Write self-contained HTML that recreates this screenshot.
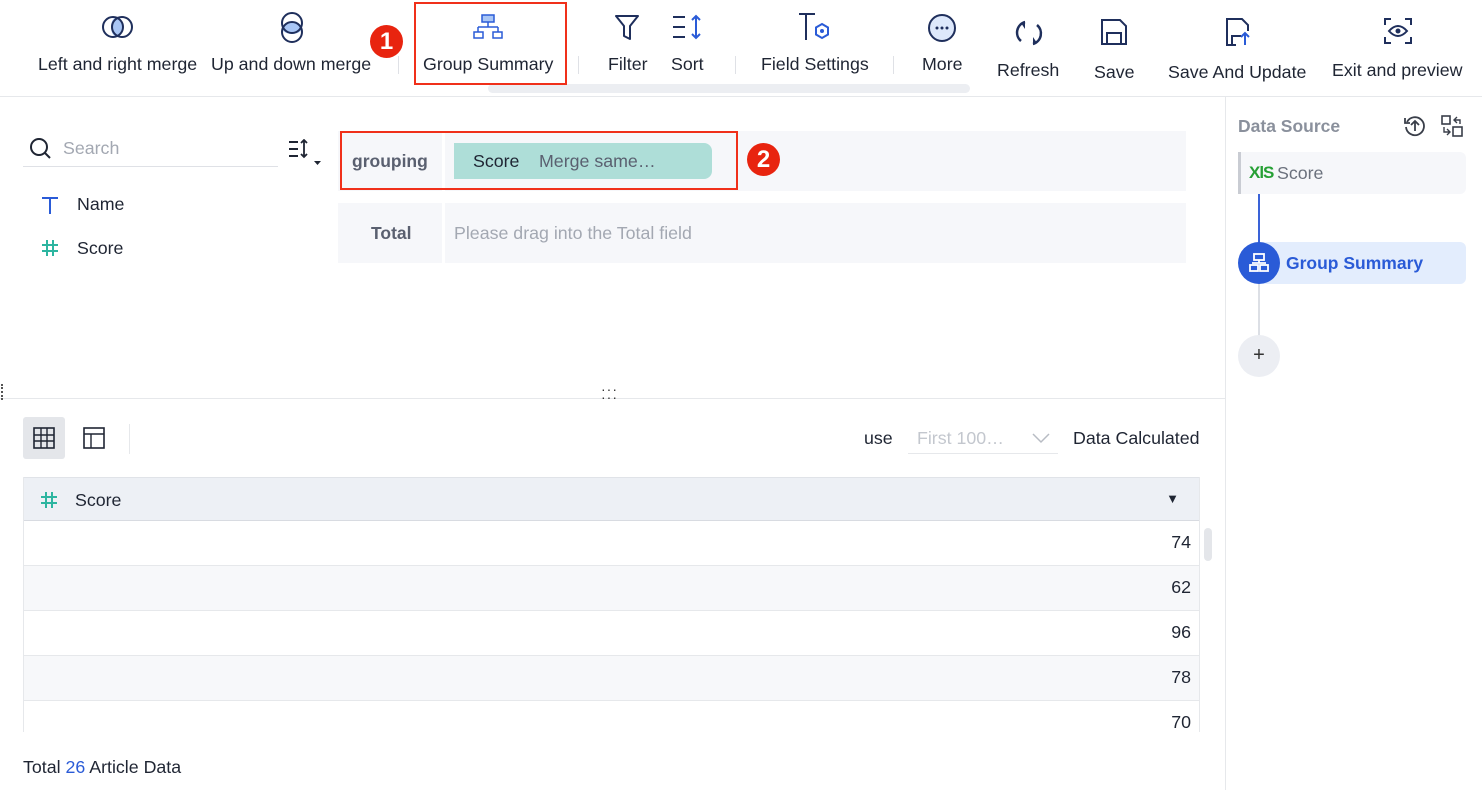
<!DOCTYPE html>
<html><head><meta charset="utf-8"><style>
*{box-sizing:border-box;margin:0;padding:0}
body{width:1482px;height:790px;overflow:hidden;background:#fff;font-family:"Liberation Sans",sans-serif;color:#1f2533;position:relative}
.a{position:absolute}
.lbl{font-size:17.8px;color:#1f2533;white-space:nowrap;position:absolute}
.sep{position:absolute;width:1px;height:18px;background:#dfe1e6;top:56px}
svg{position:absolute}
</style></head><body>
<!-- toolbar -->
<div class="a" style="left:0;top:96px;width:1482px;height:1px;background:#e6e8eb"></div>
<div class="a" style="left:488px;top:84px;width:482px;height:9px;border-radius:5px;background:#eceef2"></div>

<svg style="left:101px;top:13px" width="34" height="28" viewBox="0 0 34 28"><ellipse cx="16" cy="14" rx="6" ry="10" fill="#a9c6f5"/><circle cx="12" cy="14" r="10" fill="none" stroke="#1f2f5c" stroke-width="2"/><circle cx="21" cy="14" r="10" fill="none" stroke="#1f2f5c" stroke-width="2"/></svg>
<div class="lbl" style="left:38px;top:54px">Left and right merge</div>
<svg style="left:278px;top:10px" width="28" height="36" viewBox="0 0 28 36"><ellipse cx="14" cy="18" rx="10" ry="6" fill="#a9c6f5"/><circle cx="14" cy="13" r="10" fill="none" stroke="#1f2f5c" stroke-width="2"/><circle cx="14" cy="22" r="10" fill="none" stroke="#1f2f5c" stroke-width="2"/></svg>
<div class="lbl" style="left:211px;top:54px">Up and down merge</div>
<div class="sep" style="left:398px"></div>
<div class="a" style="left:370px;top:25px;width:33px;height:33px;border-radius:50%;background:#e8240f;color:#fff;font-weight:bold;font-size:24px;text-align:center;line-height:33px">1</div>
<div class="a" style="left:414px;top:2px;width:153px;height:83px;border:2px solid #f0301a"></div>
<svg style="left:473px;top:14px" width="30" height="26" viewBox="0 0 30 26"><rect x="9" y="1" width="12" height="7" fill="#a9c6f5" stroke="#2a5bd7" stroke-width="1.5"/><path d="M15 8v5M5 13h20M5 13v5M25 13v5" stroke="#2a5bd7" stroke-width="1.5" fill="none"/><rect x="1" y="18" width="9" height="6" fill="none" stroke="#2a5bd7" stroke-width="1.5"/><rect x="20" y="18" width="9" height="6" fill="none" stroke="#2a5bd7" stroke-width="1.5"/></svg>
<div class="lbl" style="left:423px;top:54px">Group Summary</div>
<div class="sep" style="left:578px"></div>
<svg style="left:614px;top:14px" width="26" height="28" viewBox="0 0 26 28"><path d="M2 2h22l-8 10v13l-6-3V12z" fill="none" stroke="#1f2f5c" stroke-width="2" stroke-linejoin="round"/></svg>
<div class="lbl" style="left:608px;top:54px">Filter</div>
<svg style="left:672px;top:14px" width="32" height="26" viewBox="0 0 32 26"><path d="M1 3h12M1 13h12M1 23h12" stroke="#1f2f5c" stroke-width="2"/><path d="M24 2v22M20 6l4-4 4 4M20 20l4 4 4-4" stroke="#2a5bd7" stroke-width="2" fill="none"/></svg>
<div class="lbl" style="left:671px;top:54px">Sort</div>
<div class="sep" style="left:735px"></div>
<svg style="left:798px;top:12px" width="34" height="30" viewBox="0 0 34 30"><path d="M1 2h16M8 2v26" stroke="#1f2f5c" stroke-width="2"/><path d="M24 12l6 3.5v7L24 26l-6-3.5v-7z" fill="none" stroke="#2a5bd7" stroke-width="2"/><circle cx="24" cy="19" r="2" fill="#2a5bd7"/></svg>
<div class="lbl" style="left:761px;top:54px">Field Settings</div>
<div class="sep" style="left:893px"></div>
<svg style="left:927px;top:13px" width="30" height="30" viewBox="0 0 30 30"><circle cx="15" cy="15" r="13" fill="#dde8fb" stroke="#1f2f5c" stroke-width="2"/><circle cx="10" cy="15" r="1.5" fill="#1f2f5c"/><circle cx="15" cy="15" r="1.5" fill="#1f2f5c"/><circle cx="20" cy="15" r="1.5" fill="#1f2f5c"/></svg>
<div class="lbl" style="left:922px;top:54px">More</div>
<svg style="left:1014px;top:18px" width="30" height="30" viewBox="0 0 30 30"><path d="M11 4A11 11 0 0 0 7 23" fill="none" stroke="#1f2f5c" stroke-width="2.5"/><path d="M19 26A11 11 0 0 0 23 7" fill="none" stroke="#1f2f5c" stroke-width="2.5"/><path d="M19 19l4 6-4 2z" fill="#1f2f5c"/><path d="M11 11l-4-6 4-2z" fill="#1f2f5c"/></svg>
<div class="lbl" style="left:997px;top:60px">Refresh</div>
<svg style="left:1100px;top:18px" width="28" height="28" viewBox="0 0 28 28"><path d="M2 2h18l6 6v18H2z" fill="none" stroke="#1f2f5c" stroke-width="2"/><rect x="7" y="15" width="14" height="11" fill="none" stroke="#1f2f5c" stroke-width="2"/></svg>
<div class="lbl" style="left:1094px;top:62px">Save</div>
<svg style="left:1224px;top:17px" width="28" height="30" viewBox="0 0 28 30"><path d="M12 28H3V2h15l6 6v6" fill="none" stroke="#1f2f5c" stroke-width="2"/><path d="M8 28v-9h9" fill="none" stroke="#1f2f5c" stroke-width="2"/><path d="M21 28V16M17 20l4-4 4 4" fill="none" stroke="#2a5bd7" stroke-width="2"/></svg>
<div class="lbl" style="left:1168px;top:62px">Save And Update</div>
<svg style="left:1383px;top:17px" width="30" height="28" viewBox="0 0 30 28"><path d="M2 8V2h6M22 2h6v6M28 20v6h-6M8 26H2v-6" fill="none" stroke="#1f2f5c" stroke-width="2"/><path d="M6 14q9-10 18 0q-9 10-18 0z" fill="none" stroke="#1f2f5c" stroke-width="2"/><circle cx="15" cy="14" r="2.5" fill="#1f2f5c"/></svg>
<div class="lbl" style="left:1332px;top:60px">Exit and preview</div>

<!-- right panel -->
<div class="a" style="left:1225px;top:97px;width:1px;height:693px;background:#e6e8eb"></div>
<div class="a" style="left:1238px;top:116px;font-size:17.5px;font-weight:bold;color:#8a909c">Data Source</div>
<svg style="left:1403px;top:114px" width="24" height="24" viewBox="0 0 24 24"><path d="M4 8A9 9 0 1 1 3 13" fill="none" stroke="#3a3f4a" stroke-width="1.8"/><path d="M2 4v5h5" fill="none" stroke="#3a3f4a" stroke-width="1.8"/><path d="M12 17V7M8 11l4-4 4 4" fill="none" stroke="#3a3f4a" stroke-width="1.8"/></svg>
<svg style="left:1440px;top:114px" width="24" height="24" viewBox="0 0 24 24"><rect x="2" y="2" width="8" height="8" fill="none" stroke="#3a3f4a" stroke-width="1.6"/><rect x="13" y="13" width="9" height="9" fill="none" stroke="#3a3f4a" stroke-width="1.6"/><path d="M14 6h6v4M17 3l-3 3 3 3M4 13v5h6M7 15l3 3-3 3" fill="none" stroke="#3a3f4a" stroke-width="1.4"/></svg>
<div class="a" style="left:1238px;top:152px;width:228px;height:42px;background:#f6f7fa;border-left:3px solid #c9ccd3;border-radius:0 6px 6px 0"></div>
<div class="a" style="left:1249px;top:163px;font-size:17px;color:#26a035;font-weight:bold;letter-spacing:-1px">XlS</div>
<div class="a" style="left:1277px;top:163px;font-size:17.8px;color:#6b717d">Score</div>
<div class="a" style="left:1258px;top:194px;width:2px;height:50px;background:#3a63d8"></div>
<div class="a" style="left:1258px;top:280px;width:2px;height:58px;background:#dcdfe5"></div>
<div class="a" style="left:1259px;top:242px;width:207px;height:42px;background:#e3edfd;border-radius:6px"></div>
<div class="a" style="left:1238px;top:242px;width:42px;height:42px;border-radius:50%;background:#2a5bd7"></div>
<svg style="left:1248px;top:252px" width="22" height="22" viewBox="0 0 22 22"><rect x="6" y="2" width="10" height="6" fill="none" stroke="#fff" stroke-width="1.8"/><path d="M11 8v3M4 11h14" stroke="#fff" stroke-width="1.8"/><rect x="2" y="13" width="8" height="6" fill="none" stroke="#fff" stroke-width="1.8"/><rect x="12" y="13" width="8" height="6" fill="none" stroke="#fff" stroke-width="1.8"/></svg>
<div class="a" style="left:1286px;top:253px;font-size:17.5px;font-weight:bold;color:#2a5bd7">Group Summary</div>
<div class="a" style="left:1238px;top:335px;width:42px;height:42px;border-radius:50%;background:#eceef3;text-align:center;line-height:40px;font-size:20px;color:#333">+</div>

<!-- left field list -->
<svg style="left:29px;top:137px" width="24" height="24" viewBox="0 0 24 24"><circle cx="10" cy="10" r="8" fill="none" stroke="#1f2533" stroke-width="2"/><path d="M16 16l5 5" stroke="#1f2533" stroke-width="2"/></svg>
<div class="a" style="left:63px;top:138px;font-size:17.8px;color:#a3a8b2">Search</div>
<div class="a" style="left:23px;top:166px;width:255px;height:1px;background:#dfe1e6"></div>
<svg style="left:288px;top:139px" width="36" height="30" viewBox="0 0 36 30"><path d="M1 3h9M1 10h9M1 17h9" stroke="#1f2533" stroke-width="2"/><path d="M16 1v17M13 4l3-3 3 3M13 15l3 3 3-3" stroke="#1f2533" stroke-width="1.8" fill="none"/><path d="M26 22h7l-3.5 4z" fill="#1f2533"/></svg>
<svg style="left:41px;top:196px" width="18" height="18" viewBox="0 0 18 18"><path d="M1 2h16M9 2v16" stroke="#2a5bd7" stroke-width="2"/></svg>
<div class="a" style="left:77px;top:194px;font-size:17.8px">Name</div>
<svg style="left:41px;top:239px" width="18" height="18" viewBox="0 0 18 18"><path d="M6 1v16M12 1v16M1 6h16M1 12h16" stroke="#2db5a0" stroke-width="2"/></svg>
<div class="a" style="left:77px;top:238px;font-size:17.8px">Score</div>

<!-- grouping area -->
<div class="a" style="left:338px;top:131px;width:104px;height:60px;background:#f6f7fa"></div>
<div class="a" style="left:445px;top:131px;width:741px;height:60px;background:#f6f7fa"></div>
<div class="a" style="left:352px;top:151px;font-size:17.5px;font-weight:bold;color:#5a6070">grouping</div>
<div class="a" style="left:454px;top:143px;width:258px;height:36px;background:#aeded8;border-radius:0 8px 8px 0"></div>
<div class="a" style="left:473px;top:151px;font-size:17.8px;color:#1f2533">Score</div>
<div class="a" style="left:539px;top:151px;font-size:17.8px;color:#5a6070">Merge same…</div>
<div class="a" style="left:340px;top:131px;width:398px;height:59px;border:2px solid #f0301a"></div>
<div class="a" style="left:747px;top:143px;width:33px;height:33px;border-radius:50%;background:#e8240f;color:#fff;font-weight:bold;font-size:24px;text-align:center;line-height:33px">2</div>
<div class="a" style="left:338px;top:203px;width:104px;height:60px;background:#f6f7fa"></div>
<div class="a" style="left:445px;top:203px;width:741px;height:60px;background:#f6f7fa"></div>
<div class="a" style="left:371px;top:223px;font-size:17.5px;font-weight:bold;color:#5a6070">Total</div>
<div class="a" style="left:454px;top:223px;font-size:17.8px;color:#a3a8b2">Please drag into the Total field</div>

<!-- splitter -->
<div class="a" style="left:0;top:398px;width:1225px;height:1px;background:#e6e8eb"></div>
<div class="a" style="left:601px;top:385px;font-size:14px;letter-spacing:1px;color:#333;line-height:8px">···<br>···</div>
<div class="a" style="left:1px;top:384px;width:2px;height:16px;border-left:2px dotted #555"></div>

<!-- preview -->
<div class="a" style="left:23px;top:417px;width:42px;height:42px;background:#e4e6ea;border-radius:3px"></div>
<svg style="left:33px;top:427px" width="22" height="22" viewBox="0 0 22 22"><rect x="1" y="1" width="20" height="20" fill="none" stroke="#1f2533" stroke-width="1.6"/><path d="M1 8h20M1 14h20M8 1v20M14 1v20" stroke="#1f2533" stroke-width="1.4"/></svg>
<svg style="left:83px;top:427px" width="22" height="22" viewBox="0 0 22 22"><rect x="1" y="1" width="20" height="20" fill="none" stroke="#1f2533" stroke-width="1.6"/><path d="M1 7h20M8 7v14" stroke="#1f2533" stroke-width="1.4"/></svg>
<div class="a" style="left:129px;top:424px;width:1px;height:30px;background:#e6e8eb"></div>
<div class="a" style="left:864px;top:428px;font-size:17.8px">use</div>
<div class="a" style="left:908px;top:453px;width:150px;height:1px;background:#e6e8eb"></div>
<div class="a" style="left:917px;top:428px;font-size:17.8px;color:#c3c7ce">First 100…</div>
<svg style="left:1031px;top:432px" width="20" height="12" viewBox="0 0 20 12"><path d="M2 2l8 8 8-8" fill="none" stroke="#b8bcc4" stroke-width="1.5"/></svg>
<div class="a" style="left:1073px;top:428px;font-size:17.8px">Data Calculated</div>

<div class="a" style="left:23px;top:477px;width:1177px;height:255px;border-left:1px solid #e6e8eb;border-right:1px solid #e6e8eb;overflow:hidden">
 <div style="height:44px;background:#edf0f5;border-top:1px solid #e0e3e8;border-bottom:1px solid #d8dbe1;position:relative">
  <svg style="left:16px;top:13px" width="18" height="18" viewBox="0 0 18 18"><path d="M6 1v16M12 1v16M1 6h16M1 12h16" stroke="#2db5a0" stroke-width="2"/></svg>
  <span class="a" style="left:51px;top:12px;font-size:17.8px">Score</span>
  <span class="a" style="right:20px;top:13px;font-size:13px">▼</span>
 </div>
 <div style="height:45px;background:#fff;border-bottom:1px solid #e6e8eb;text-align:right;padding:11px 8px 0 0;font-size:17.8px">74</div>
 <div style="height:45px;background:#f7f8fa;border-bottom:1px solid #e6e8eb;text-align:right;padding:11px 8px 0 0;font-size:17.8px">62</div>
 <div style="height:45px;background:#fff;border-bottom:1px solid #e6e8eb;text-align:right;padding:11px 8px 0 0;font-size:17.8px">96</div>
 <div style="height:45px;background:#f7f8fa;border-bottom:1px solid #e6e8eb;text-align:right;padding:11px 8px 0 0;font-size:17.8px">78</div>
 <div style="height:45px;background:#fff;text-align:right;padding:11px 8px 0 0;font-size:17.8px">70</div>
</div>
<div class="a" style="left:1204px;top:528px;width:8px;height:33px;background:#e4e6ea;border-radius:4px"></div>
<div class="a" style="left:23px;top:757px;font-size:17.8px">Total <span style="color:#2a5bd7">26</span> Article Data</div>
</body></html>
